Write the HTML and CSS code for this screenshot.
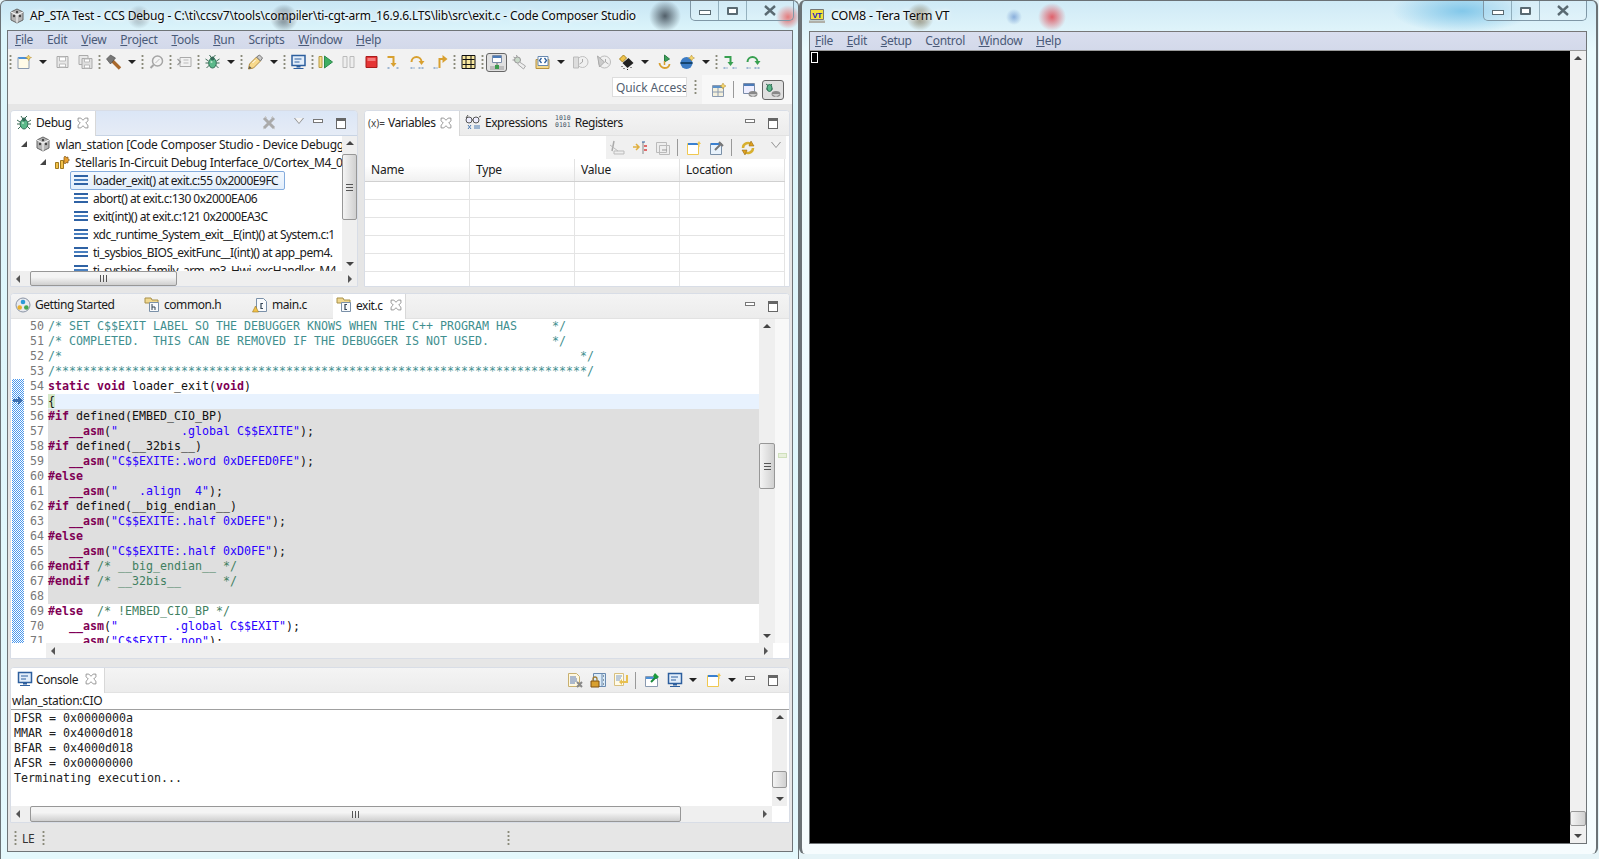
FILE: index.html
```html
<!DOCTYPE html>
<html lang="en">
<head>
  <meta charset="UTF-8">
  <title>AP_STA Test - CCS Debug</title>
  <link rel="stylesheet" href="styles.css">
</head>
<body>
  <svg class="defs" width="0" height="0">
    <symbol id="i-cube" viewBox="0 0 16 16"><path d="M8 1l6 3v8l-6 3-6-3V4z" fill="#b5b5b5" stroke="#666"/><path d="M2 4l6 3 6-3M8 7v8" fill="none" stroke="#fff"/><circle cx="5" cy="8" r="1.2" fill="#444"/><circle cx="11" cy="8" r="1.2" fill="#444"/><circle cx="8" cy="4" r="1.2" fill="#444"/></symbol>
    <symbol id="i-new" viewBox="0 0 16 16"><path d="M1.500 3.500h11v11h-11z" fill="#fffbe8" stroke="#8a9ab0"/><path d="M2 3h10v2H2z" fill="#4a90d8"/><path d="M12 1l1 2 2 .5-2 1-1 2-1-2-2-1 2-.5z" fill="#f6d66a" stroke="#b08a30" stroke-width=".5"/></symbol>
    <symbol id="i-save" viewBox="0 0 16 16"><path d="M2.500 2.500h11v11h-11z" fill="#e8e8e8" stroke="#aaa"/><path d="M5 3h6v4H5zM5 10h6v3H5z" fill="#fff" stroke="#bbb"/></symbol>
    <symbol id="i-saveall" viewBox="0 0 16 16"><path d="M1.500 1.500h9v9h-9z" fill="#e8e8e8" stroke="#aaa"/><path d="M4.500 4.500h10v10h-10z" fill="#e0e0e0" stroke="#aaa"/><path d="M7 5h5v3H7zM7 11h5v3H7z" fill="#fff" stroke="#bbb"/></symbol>
    <symbol id="i-hammer" viewBox="0 0 16 16"><path d="M6 6l8.500 8.500" stroke="#a8682c" stroke-width="3.400"/><path d="M1 5l4-4 5 3-5 6z" fill="#777" stroke="#444" stroke-width=".6"/></symbol>
    <symbol id="i-search" viewBox="0 0 16 16"><circle cx="9" cy="7" r="5" fill="#f4f4f4" stroke="#a5a5a5" stroke-width="1.500"/><path d="M5 11l-3 3" stroke="#a5a5a5" stroke-width="2"/><path d="M7 9l4-4" stroke="#bbb"/></symbol>
    <symbol id="i-ext" viewBox="0 0 16 16"><path d="M3.500 3.500h11v9h-11z" fill="#f2f2f2" stroke="#aaa"/><path d="M1 5l3 3-3 3" fill="none" stroke="#999" stroke-width="1.200"/><path d="M7 6h5M7 9h5" stroke="#bbb"/></symbol>
    <symbol id="i-bug" viewBox="0 0 16 16"><path d="M1 5l3 2M15 5l-3 2M1 9h3M15 9h-3M2 14l3-3M14 14l-3-3M5 1l2 3M11 1L9 3" stroke="#3b6b55" fill="none"/><ellipse cx="8" cy="9" rx="3.800" ry="5" fill="#5bb98a" stroke="#2f6e55"/><circle cx="8" cy="4.500" r="2" fill="#356b58"/><circle cx="7" cy="8" r="1" fill="#bfe8cf"/></symbol>
    <symbol id="i-pencil" viewBox="0 0 16 16"><path d="M1 15l1-5 7-7 4 4-7 7z" fill="#f8d98c" stroke="#b08a40"/><path d="M5 9l3-3" stroke="#fff"/><path d="M9 3l3-2 3 3-2 3z" fill="#c8c8c8" stroke="#777"/><path d="M1 15l1-3 2 2z" fill="#555"/></symbol>
    <symbol id="i-monitor" viewBox="0 0 16 16"><path d="M1.500 1.500h13v10h-13z" fill="#e3eefa" stroke="#2d5f9e" stroke-width="1.500"/><path d="M4 5h7M4 8h5" stroke="#2d5f9e"/><path d="M6 12h4v1.500H6zM3 14h10v1H3z" fill="#2d5f9e"/></symbol>
    <symbol id="i-resume" viewBox="0 0 16 16"><path d="M1.500 2.500h3v11h-3z" fill="#f5dd8c" stroke="#b89a40"/><path d="M7 2l8 6-8 6z" fill="#3fae62" stroke="#2c8a4c"/></symbol>
    <symbol id="i-suspend" viewBox="0 0 16 16"><path d="M2.500 2.500h4v11h-4zM9.500 2.500h4v11h-4z" fill="#eee" stroke="#bbb"/></symbol>
    <symbol id="i-stop" viewBox="0 0 16 16"><path d="M2.500 2.500h11v11h-11z" fill="#e53535" stroke="#a81c1c"/><path d="M4 4h8v3H4z" fill="#f47c7c"/></symbol>
    <symbol id="i-into" viewBox="0 0 16 16"><path d="M1 3h6v7" fill="none" stroke="#d8a030" stroke-width="2"/><path d="M4 9h6l-3 4z" fill="#d8a030"/><path d="M1 14h3M10 14h3" stroke="#4a7ab0" stroke-dasharray="2 1"/></symbol>
    <symbol id="i-over" viewBox="0 0 16 16"><path d="M2 8a5 5 0 0 1 10 0" fill="none" stroke="#d8a030" stroke-width="2"/><path d="M9 7h6l-3 4z" fill="#d8a030"/><path d="M1 14h4M9 14h5" stroke="#4a7ab0" stroke-dasharray="2 1"/></symbol>
    <symbol id="i-ret" viewBox="0 0 16 16"><path d="M7 14V5h4" fill="none" stroke="#d8a030" stroke-width="2"/><path d="M10 1l5 4-5 4z" fill="#d8a030"/><path d="M1 14h4" stroke="#4a7ab0" stroke-dasharray="2 1"/></symbol>
    <symbol id="i-grid" viewBox="0 0 16 16"><path d="M1.500 1.500h13v13h-13z" fill="#f8e8a0" stroke="#111"/><path d="M5.500 2v12M10.500 2v12M2 5.500h12M2 10.500h12" stroke="#111"/></symbol>
    <symbol id="i-mode" viewBox="0 0 16 16"><path d="M3.500 1.500h9v7h-9z" fill="#fff" stroke="#7a8ca8"/><path d="M4 2h8v2H4z" fill="#4a7ab8"/><path d="M8 9v3" stroke="#666"/><path d="M1 13h14M1 15h14" stroke="#999"/><path d="M6 11h4v4H6z" fill="#3a9a4c"/></symbol>
    <symbol id="i-tag" viewBox="0 0 16 16"><path d="M2 3l3 2M5 1l1 3M1 6h3" stroke="#999"/><ellipse cx="6" cy="6" rx="3" ry="3" fill="#c8d8c8" stroke="#999"/><path d="M8 8l6 4-2 3-6-5z" fill="#eee" stroke="#aaa"/></symbol>
    <symbol id="i-folder" viewBox="0 0 16 16"><path d="M1.500 14.500v-9h13v9z" fill="#f5d98e" stroke="#b8923e"/><path d="M3.500 2.500h10v9h-10z" fill="#fff" stroke="#6a8ab0"/><path d="M7 4l-2 2.500L7 9M10 4l2 2.500L10 9" fill="none" stroke="#2d5f9e" stroke-width="1.300"/></symbol>
    <symbol id="i-g1" viewBox="0 0 16 16"><circle cx="10" cy="8" r="5.500" fill="#f0f0f0" stroke="#c0c0c0"/><path d="M1 3h5v11H1z" fill="#ddd" stroke="#bbb"/><path d="M10 5v3l-3 2" stroke="#aaa" fill="none"/></symbol>
    <symbol id="i-g2" viewBox="0 0 16 16"><circle cx="9" cy="8" r="6" fill="#f0f0f0" stroke="#bbb"/><path d="M2 2l7 6-5 5z" fill="#ccc" stroke="#aaa"/><path d="M10 5v3l3 2" stroke="#aaa" fill="none"/></symbol>
    <symbol id="i-chip" viewBox="0 0 16 16"><path d="M4 9l6-5 5 5-6 5z" fill="#222"/><path d="M1 5l4-4 3 3-4 4z" fill="#f0c44c" stroke="#a88420"/><path d="M4 12l-1 1M6 14l-1 1M9 15v1M12 13l1 1" stroke="#222"/></symbol>
    <symbol id="i-reload" viewBox="0 0 16 16"><path d="M3 9c0 3 3 5 5 5s5-1 5-4" fill="none" stroke="#d8a030" stroke-width="1.800"/><path d="M8 1l5 4-5 3z" fill="#3aa05a" stroke="#2c7a44"/><path d="M8 7v4" stroke="#d8a030" stroke-width="1.500"/></symbol>
    <symbol id="i-ball" viewBox="0 0 16 16"><circle cx="7" cy="9" r="6" fill="#3d7cc4"/><path d="M1 9h12" stroke="#16456f" stroke-width="2"/><path d="M12 1l1 2 2 1-2 1-1 2-1-2-2-1 2-1z" fill="#f6d66a" stroke="#b08a30" stroke-width=".5"/></symbol>
    <symbol id="i-into2" viewBox="0 0 16 16"><path d="M2 3h6v6" fill="none" stroke="#38a050" stroke-width="2"/><path d="M5 8h6l-3 4z" fill="#38a050"/><path d="M1 14h4M10 14h4" stroke="#4a7ab0" stroke-dasharray="2 1"/></symbol>
    <symbol id="i-over2" viewBox="0 0 16 16"><path d="M2 8a5 5 0 0 1 10 0" fill="none" stroke="#38a050" stroke-width="2"/><path d="M9 7h6l-3 4z" fill="#38a050"/><path d="M1 14h4M9 14h5" stroke="#4a7ab0" stroke-dasharray="2 1"/></symbol>
    <symbol id="i-persp" viewBox="0 0 16 16"><path d="M1.500 3.500h11v11h-11z" fill="#f4f0dc" stroke="#8a9ab0"/><path d="M2 4h10v2H2z" fill="#5a90c8"/><path d="M7 6v8M2 10h10" stroke="#8a9ab0"/><path d="M12 1l1 2 2 1-2 1-1 2-1-2-2-1 2-1z" fill="#f6d66a" stroke="#b08a30" stroke-width=".5"/></symbol>
    <symbol id="i-edit-p" viewBox="0 0 16 16"><path d="M1.500 1.500h11v10h-11z" fill="#eef" stroke="#7a8ca8"/><path d="M2 2h10v2H2z" fill="#4a7ab8"/><ellipse cx="11" cy="12" rx="4.500" ry="3" fill="#888"/><path d="M7 12l4 3 4-3" fill="#ccc"/></symbol>
    <symbol id="i-debug-p" viewBox="0 0 16 16"><path d="M1 2l3 2M7 2L5 4M1 7h2M8 7H6" stroke="#2f6e55" fill="none"/><ellipse cx="4.500" cy="6" rx="2.500" ry="3.500" fill="#5bb98a" stroke="#2f6e55"/><ellipse cx="11" cy="12" rx="4.500" ry="3" fill="#888"/><path d="M7 12l4 3 4-3" fill="#ccc"/></symbol>
    <symbol id="i-rm" viewBox="0 0 16 16"><path d="M4 1l2 2M12 1l-2 2M2 14l3-2M14 14l-3-2" stroke="#ccc"/><path d="M3 3l10 10M13 3L3 13" stroke="#aaa" stroke-width="3"/></symbol>
    <symbol id="i-start" viewBox="0 0 16 16"><circle cx="8" cy="8" r="7" fill="#e8eaef" stroke="#8a94a4"/><circle cx="8" cy="5" r="2.300" fill="#2a9ad8"/><circle cx="4.700" cy="10.500" r="2.300" fill="#e8b030"/><circle cx="11.300" cy="10.500" r="2.300" fill="#46a850"/></symbol>
    <symbol id="i-h" viewBox="0 0 16 16"><path d="M1 1h6l1 2h6v3H1z" fill="#f0d890" stroke="#a89048"/><path d="M5.500 5.500h9v9h-9z" fill="#f8fafc" stroke="#7a90a8"/><path d="M8 7v6M8 10h3v3" fill="none" stroke="#345"/></symbol>
    <symbol id="i-c" viewBox="0 0 16 16"><path d="M4.500 1.500h7l3 3v10h-10z" fill="#f8fafc" stroke="#7a90a8"/><path d="M11 6.500H9v5h2" fill="none" stroke="#345" stroke-width="1.200"/><path d="M3.500 9l3 6h-6z" fill="#f2c24a" stroke="#a07a20" stroke-width=".6"/></symbol>
    <symbol id="i-c2" viewBox="0 0 16 16"><path d="M1 1h6l1 2h6v3H1z" fill="#f0d890" stroke="#a89048"/><path d="M5.500 5.500h9v9h-9z" fill="#f8fafc" stroke="#7a90a8"/><path d="M11 7.500H9v5h2" fill="none" stroke="#345" stroke-width="1.200"/></symbol>
    <symbol id="i-expr" viewBox="0 0 16 16"><circle cx="4" cy="6" r="3" fill="#eef" stroke="#555"/><circle cx="11" cy="6" r="3" fill="#eef" stroke="#555"/><path d="M7 6h1M1 4l2-3M14 3l2-1" stroke="#555" fill="none"/><path d="M9 12h6M9 14h6M3 11l3 4M6 11l-3 4" stroke="#4a7ab0"/></symbol>
    <symbol id="i-stack" viewBox="0 0 16 16"><path d="M1 3h14v2H1z" fill="#2f62a4"/><path d="M1 7h14v2H1z" fill="#4a80c0"/><path d="M1 11h14v2H1z" fill="#2f62a4"/></symbol>
    <symbol id="i-conn" viewBox="0 0 16 16"><path d="M1.500 8.500h3v6h-3zM6.500 6.500h3v8h-3z" fill="#f2c24a" stroke="#a07a20"/><path d="M11 2l1 1.500 2-.5v2l1.500 1-1.500 1v2l-2-.5L11 10l-1-1.500V3.500z" fill="#e8a030" stroke="#805010" stroke-width=".7"/></symbol>
    <symbol id="i-v1" viewBox="0 0 16 16"><path d="M5 1l-2 10" stroke="#aaa" stroke-width="1.500"/><path d="M1 5l8 6M5 11h10v3H5z" fill="#eee" stroke="#bbb"/></symbol>
    <symbol id="i-v2" viewBox="0 0 16 16"><path d="M1 7h5M4 4l3 3-3 3" stroke="#e0b040" fill="none" stroke-width="1.500"/><path d="M11 2v12" stroke="#888"/><path d="M12 5h3v2h-3zM12 9h3v2h-3z" fill="#e06a6a"/><path d="M10 2h3" stroke="#2d5f9e"/></symbol>
    <symbol id="i-v3" viewBox="0 0 16 16"><path d="M1.500 2.500h10v10h-10zM4.500 5.500h10v9h-10z" fill="#eee" stroke="#bbb"/><path d="M7 10h5" stroke="#999"/></symbol>
    <symbol id="i-v4" viewBox="0 0 16 16"><path d="M1.500 3.500h11v11h-11z" fill="#fff" stroke="#f0c850"/><path d="M2 3h10v2H2z" fill="#3a80d0"/><path d="M13 1l-2 3h4z" fill="#f0c850"/><path d="M12.500 4h1v3h-1z" fill="#f0c850"/></symbol>
    <symbol id="i-v5" viewBox="0 0 16 16"><path d="M1.500 3.500h11v11h-11z" fill="#e8f2fc" stroke="#7a90a8"/><path d="M2 3h10v2H2z" fill="#3a80d0"/><path d="M6 10l6-6M10 2l4 4" stroke="#777" stroke-width="2"/></symbol>
    <symbol id="i-sync" viewBox="0 0 16 16"><path d="M3 8a5 5 0 0 1 9-3M13 8a5 5 0 0 1-9 3" fill="none" stroke="#d8b030" stroke-width="2.500"/><path d="M11 1l3 5-5 0zM5 15L2 10h5z" fill="#e0a020" stroke="#886010" stroke-width=".5"/></symbol>
    <symbol id="i-cl1" viewBox="0 0 16 16"><path d="M1.500 1.500h8l3 3v10h-11z" fill="#fff8e0" stroke="#c8b070"/><path d="M3 5h6M3 7h7M3 9h7M3 11h5" stroke="#5a7ab8"/><path d="M10 10l5 5M15 10l-5 5" stroke="#888" stroke-width="2"/></symbol>
    <symbol id="i-cl2" viewBox="0 0 16 16"><path d="M3.500 1.500h12v13h-12z" fill="#dcecf8" stroke="#6a8ab0"/><path d="M12 2v12" stroke="#6a8ab0"/><path d="M13 4h1M13 8h1M13 12h1" stroke="#345"/><path d="M1 9h8v6H1z" fill="#d8a030" stroke="#805010"/><path d="M3 9V7a2 2 0 0 1 4 0v2" fill="none" stroke="#a07a30" stroke-width="1.300"/></symbol>
    <symbol id="i-cl3" viewBox="0 0 16 16"><path d="M1.500 1.500h9v12h-9z" fill="#fffbe8" stroke="#d8c080"/><path d="M3 4h6M3 6h5M3 8h4" stroke="#7a9ac8"/><path d="M14 3v7H8" fill="none" stroke="#e8c050" stroke-width="2"/><path d="M9 7l-3 3 3 3z" fill="#e8c050"/></symbol>
    <symbol id="i-pin" viewBox="0 0 16 16"><path d="M1.500 4.500h12v10h-12z" fill="#fff" stroke="#8a9ab0"/><path d="M2 5h11v2H2z" fill="#4a90d8"/><path d="M7 10l6-6" stroke="#1a8a3a" stroke-width="2"/><path d="M11 1l4 4-3 2-3-3z" fill="#1a9a3a"/></symbol>
    <symbol id="i-vt" viewBox="0 0 16 16"><path d="M1.500 1.500h13v10h-13z" fill="#f4e23c" stroke="#777"/><text x="8" y="9.500" text-anchor="middle" font-family="Liberation Sans, sans-serif" font-size="8" font-weight="bold" fill="#1818c0">VT</text><path d="M0 12.500h16v2.500H0z" fill="#b0b0a8"/></symbol>
    <symbol id="x-close" viewBox="0 0 11 11"><path d="M1 1h2.500l2 2 2-2H10v2.500l-2 2 2 2V10H7.500l-2-2-2 2H1V7.500l2-2-2-2z" fill="#fff" stroke="#8a8a8a" stroke-width=".8"/></symbol>
  </svg>

  <div class="window window-left">
    <div class="titlebar">
      <svg class="ic app-ic"><use href="#i-cube"/></svg>
      <span class="title-text">AP_STA Test - CCS Debug - C:\ti\ccsv7\tools\compiler\ti-cgt-arm_16.9.6.LTS\lib\src\exit.c - Code Composer Studio</span>
      <div class="caption">
        <span class="cap-btn cap-min"><i></i></span>
        <span class="cap-btn cap-max"><i></i></span>
        <span class="cap-btn cap-close"><svg width="12" height="11"><path d="M1 1l10 9M11 1L1 10" stroke="#5a6a72" stroke-width="2.400"/></svg></span>
      </div>
    </div>

    <div class="client">
      <div class="menubar">
        <span><u>F</u>ile</span><span>Edit</span><span><u>V</u>iew</span><span><u>P</u>roject</span><span><u>T</u>ools</span><span><u>R</u>un</span><span>Scripts</span><span><u>W</u>indow</span><span><u>H</u>elp</span>
      </div>

      <div class="toolarea">
        <div class="toolbar">
          <i class="grip"></i><svg class="tb"><use href="#i-new"/></svg><i class="drop"></i><svg class="tb"><use href="#i-save"/></svg><svg class="tb"><use href="#i-saveall"/></svg>
          <i class="grip"></i><svg class="tb"><use href="#i-hammer"/></svg><i class="drop"></i>
          <i class="grip"></i><svg class="tb"><use href="#i-search"/></svg>
          <i class="grip"></i><svg class="tb"><use href="#i-ext"/></svg>
          <i class="grip"></i><svg class="tb"><use href="#i-bug"/></svg><i class="drop"></i>
          <i class="grip"></i><svg class="tb"><use href="#i-pencil"/></svg><i class="drop"></i>
          <i class="grip"></i><svg class="tb"><use href="#i-monitor"/></svg>
          <i class="grip tight"></i><svg class="tb"><use href="#i-resume"/></svg><svg class="tb"><use href="#i-suspend"/></svg><svg class="tb"><use href="#i-stop"/></svg><svg class="tb"><use href="#i-into"/></svg><svg class="tb"><use href="#i-over"/></svg><svg class="tb"><use href="#i-ret"/></svg>
          <i class="grip"></i><svg class="tb"><use href="#i-grid"/></svg>
          <i class="grip"></i><span class="tb-on"><svg class="ic"><use href="#i-mode"/></svg></span><svg class="tb"><use href="#i-tag"/></svg><svg class="tb"><use href="#i-folder"/></svg><i class="drop"></i><svg class="tb"><use href="#i-g1"/></svg><svg class="tb"><use href="#i-g2"/></svg><svg class="tb"><use href="#i-chip"/></svg><i class="drop"></i><svg class="tb"><use href="#i-reload"/></svg><svg class="tb"><use href="#i-ball"/></svg><i class="drop"></i>
          <i class="grip"></i><svg class="tb"><use href="#i-into2"/></svg><svg class="tb"><use href="#i-over2"/></svg>
        </div>
        <div class="toolbar2">
          <span class="quick">Quick Access</span>
          <i class="grip"></i>
          <div class="persp">
            <svg class="ic"><use href="#i-persp"/></svg>
            <i class="vsep"></i>
            <svg class="ic"><use href="#i-edit-p"/></svg>
            <span class="tb-on small"><svg class="ic"><use href="#i-debug-p"/></svg></span>
          </div>
        </div>
      </div>

      <div class="workbench">
        <div class="top-row">
          <section class="pane debug-pane">
            <div class="tabbar tabbar-blue">
              <div class="tab tab-on tab-debug"><svg class="ic"><use href="#i-bug"/></svg><span>Debug</span><svg class="close"><use href="#x-close"/></svg></div>
              <div class="tab-tools">
                <svg class="ic"><use href="#i-rm"/></svg>
                <i class="view-menu"></i><i class="pane-min"></i><i class="pane-max"></i>
              </div>
            </div>
            <div class="debug-body">
              <div class="tree">
                <div class="node lv0"><i class="twist"></i><svg class="ic"><use href="#i-cube"/></svg><span>wlan_station [Code Composer Studio - Device Debugg</span></div>
                <div class="node lv1"><i class="twist"></i><svg class="ic"><use href="#i-conn"/></svg><span>Stellaris In-Circuit Debug Interface_0/Cortex_M4_0</span></div>
                <div class="node lv2"><div class="frame-sel"><svg class="ic"><use href="#i-stack"/></svg><span>loader_exit() at exit.c:55 0x2000E9FC</span></div></div>
                <div class="node lv2"><svg class="ic"><use href="#i-stack"/></svg><span>abort() at exit.c:130 0x2000EA06</span></div>
                <div class="node lv2"><svg class="ic"><use href="#i-stack"/></svg><span>exit(int)() at exit.c:121 0x2000EA3C</span></div>
                <div class="node lv2"><svg class="ic"><use href="#i-stack"/></svg><span>xdc_runtime_System_exit__E(int)() at System.c:1</span></div>
                <div class="node lv2"><svg class="ic"><use href="#i-stack"/></svg><span>ti_sysbios_BIOS_exitFunc__I(int)() at app_pem4.</span></div>
                <div class="node lv2"><svg class="ic"><use href="#i-stack"/></svg><span>ti_sysbios_family_arm_m3_Hwi_excHandler_M4</span></div>
              </div>
              <div class="vbar vbar-debug"><i class="up"></i><div class="track"><div class="thumb thumb-debug"><b></b></div></div><i class="down"></i></div>
            </div>
            <div class="hbar hbar-debug"><i class="left"></i><div class="track"><div class="thumb thumb-dbg-h"><b></b></div></div><i class="right"></i></div>
          </section>

          <section class="pane var-pane">
            <div class="tabbar">
              <div class="tab tab-on tab-var"><span class="x-eq">(x)=</span><span>Variables</span><svg class="close"><use href="#x-close"/></svg></div>
              <div class="tab tab-expr"><svg class="ic"><use href="#i-expr"/></svg><span>Expressions</span></div>
              <div class="tab tab-reg"><span class="bin">1010<br>0101</span><span>Registers</span></div>
              <div class="tab-tools"><i class="pane-min"></i><i class="pane-max"></i></div>
            </div>
            <div class="var-tools">
              <svg class="ic"><use href="#i-v1"/></svg><svg class="ic"><use href="#i-v2"/></svg><svg class="ic"><use href="#i-v3"/></svg><i class="vsep"></i><svg class="ic"><use href="#i-v4"/></svg><svg class="ic"><use href="#i-v5"/></svg><i class="vsep"></i><svg class="ic"><use href="#i-sync"/></svg><i class="view-menu"></i>
            </div>
            <div class="var-table">
              <div class="var-head"><span>Name</span><span>Type</span><span>Value</span><span>Location</span></div>
              <div class="var-row"><i></i><i></i><i></i><i></i></div>
              <div class="var-row"><i></i><i></i><i></i><i></i></div>
              <div class="var-row"><i></i><i></i><i></i><i></i></div>
              <div class="var-row"><i></i><i></i><i></i><i></i></div>
              <div class="var-row"><i></i><i></i><i></i><i></i></div>
              <div class="var-row"><i></i><i></i><i></i><i></i></div>
            </div>
          </section>
        </div>

        <section class="pane editor-pane">
          <div class="tabbar">
            <div class="tab tab-gs"><svg class="ic"><use href="#i-start"/></svg><span>Getting Started</span></div>
            <div class="tab tab-common"><svg class="ic"><use href="#i-h"/></svg><span>common.h</span></div>
            <div class="tab tab-main"><svg class="ic"><use href="#i-c"/></svg><span>main.c</span></div>
            <div class="tab tab-on tab-exit"><svg class="ic"><use href="#i-c2"/></svg><span>exit.c</span><svg class="close"><use href="#x-close"/></svg></div>
            <div class="tab-tools"><i class="pane-min"></i><i class="pane-max"></i></div>
          </div>
          <div class="editor-body">
            <div class="ruler">
              <div class="ruler-blank"></div>
              <div class="ruler-mark"><svg class="pc-arrow" width="10" height="9"><path d="M0 3h5V0l5 4.500L5 9V6H0z" fill="#3d6fb0"/></svg></div>
            </div>
            <div class="code">
<div class="ln"><b>50</b><code class="cm">/* SET C$$EXIT LABEL SO THE DEBUGGER KNOWS WHEN THE C++ PROGRAM HAS     */</code></div>
<div class="ln"><b>51</b><code class="cm">/* COMPLETED.  THIS CAN BE REMOVED IF THE DEBUGGER IS NOT USED.         */</code></div>
<div class="ln"><b>52</b><code class="cm">/*                                                                          */</code></div>
<div class="ln"><b>53</b><code class="cm">/****************************************************************************/</code></div>
<div class="ln"><b>54</b><code><em>static</em> <em>void</em> loader_exit(<em>void</em>)</code></div>
<div class="ln ln-cur"><b>55</b><code><mark>{</mark></code></div>
<div class="ln ln-grey"><b>56</b><code><em>#if</em> defined(EMBED_CIO_BP)</code></div>
<div class="ln ln-grey"><b>57</b><code>   <em>__asm</em>(<s>"         .global C$$EXITE"</s>);</code></div>
<div class="ln ln-grey"><b>58</b><code><em>#if</em> defined(__32bis__)</code></div>
<div class="ln ln-grey"><b>59</b><code>   <em>__asm</em>(<s>"C$$EXITE:.word 0xDEFED0FE"</s>);</code></div>
<div class="ln ln-grey"><b>60</b><code><em>#else</em></code></div>
<div class="ln ln-grey"><b>61</b><code>   <em>__asm</em>(<s>"   .align  4"</s>);</code></div>
<div class="ln ln-grey"><b>62</b><code><em>#if</em> defined(__big_endian__)</code></div>
<div class="ln ln-grey"><b>63</b><code>   <em>__asm</em>(<s>"C$$EXITE:.half 0xDEFE"</s>);</code></div>
<div class="ln ln-grey"><b>64</b><code><em>#else</em></code></div>
<div class="ln ln-grey"><b>65</b><code>   <em>__asm</em>(<s>"C$$EXITE:.half 0xD0FE"</s>);</code></div>
<div class="ln ln-grey"><b>66</b><code><em>#endif</em> <span class="cm2">/* __big_endian__ */</span></code></div>
<div class="ln ln-grey"><b>67</b><code><em>#endif</em> <span class="cm2">/* __32bis__      */</span></code></div>
<div class="ln ln-grey"><b>68</b><code></code></div>
<div class="ln"><b>69</b><code><em>#else</em>  <span class="cm2">/* !EMBED_CIO_BP */</span></code></div>
<div class="ln"><b>70</b><code>   <em>__asm</em>(<s>"        .global C$$EXIT"</s>);</code></div>
<div class="ln"><b>71</b><code>   <em>__asm</em>(<s>"C$$EXIT: nop"</s>);</code></div>
            </div>
            <div class="vbar vbar-editor"><i class="up"></i><div class="track"><div class="thumb thumb-editor"><b></b></div></div><i class="down"></i></div>
            <div class="overview"><i></i></div>
          </div>
          <div class="editor-hbar"><i class="left"></i><i class="right"></i></div>
        </section>

        <section class="pane console-pane">
          <div class="tabbar">
            <div class="tab tab-on tab-console"><svg class="ic"><use href="#i-monitor"/></svg><span>Console</span><svg class="close"><use href="#x-close"/></svg></div>
            <div class="tab-tools console-tools">
              <svg class="ic"><use href="#i-cl1"/></svg><svg class="ic"><use href="#i-cl2"/></svg><svg class="ic"><use href="#i-cl3"/></svg><i class="vsep"></i><svg class="ic"><use href="#i-pin"/></svg><svg class="ic"><use href="#i-monitor"/></svg><i class="drop"></i><svg class="ic"><use href="#i-v4"/></svg><i class="drop"></i><i class="pane-min"></i><i class="pane-max"></i>
            </div>
          </div>
          <div class="console-label">wlan_station:CIO</div>
          <div class="console-body">
            <pre class="console-out">DFSR = 0x0000000a
MMAR = 0x4000d018
BFAR = 0x4000d018
AFSR = 0x00000000
Terminating execution...</pre>
            <div class="vbar vbar-console"><i class="up"></i><div class="track"><div class="thumb thumb-console"></div></div><i class="down"></i></div>
          </div>
          <div class="hbar hbar-console"><i class="left"></i><div class="track"><div class="thumb thumb-con-h"><b></b></div></div><i class="right"></i></div>
        </section>
      </div>

      <div class="statusbar">
        <i class="grip"></i><span class="status-le">LE</span><i class="grip"></i><i class="grip status-end"></i>
      </div>
    </div>
  </div>

  <div class="window window-right">
    <div class="titlebar">
      <svg class="ic app-ic vt-ic"><use href="#i-vt"/></svg>
      <span class="title-text">COM8 - Tera Term VT</span>
      <div class="caption">
        <span class="cap-btn cap-min"><i></i></span>
        <span class="cap-btn cap-max"><i></i></span>
        <span class="cap-btn cap-close"><svg width="12" height="11"><path d="M1 1l10 9M11 1L1 10" stroke="#5a6a72" stroke-width="2.400"/></svg></span>
      </div>
    </div>
    <div class="client term-client">
      <div class="menubar term-menu">
        <span><u>F</u>ile</span><span><u>E</u>dit</span><span><u>S</u>etup</span><span>C<u>o</u>ntrol</span><span><u>W</u>indow</span><span><u>H</u>elp</span>
      </div>
      <div class="term-body">
        <div class="term-screen"><div class="cursor"></div></div>
        <div class="vbar vbar-term"><i class="up"></i><div class="track"><div class="thumb thumb-term"></div></div><i class="down"></i></div>
      </div>
    </div>
  </div>
</body>
</html>
```

FILE: styles.css
```css
/* page + glass frame */
html, body {
  margin: 0;
  padding: 0;
  height: 859px;
  overflow: hidden;
}

body {
  display: flex;
  font-family: "Noto Sans", sans-serif;
  font-size: 12px;
  letter-spacing: -0.3px;
  color: #1a1a1a;
  background: #e6f4f8;
}

.defs {
  position: absolute;
}

.ic {
  width: 16px;
  height: 16px;
  flex: none;
}

.window {
  display: flex;
  flex-direction: column;
  height: 859px;
  flex: none;
  box-sizing: border-box;
  border: 1px solid #6b7276;
  border-bottom: 0;
  border-radius: 6px 6px 0 0;
}

.window-left {
  width: 799px;
  padding: 0 5px 7px 6px;
  background:
    radial-gradient(circle 14px at 283px 17px, rgba(60, 70, 80, .75), transparent),
    radial-gradient(circle 12px at 138px 16px, rgba(60, 70, 80, .45), transparent),
    radial-gradient(circle 16px at 664px 15px, rgba(50, 60, 70, .8), transparent),
    radial-gradient(circle 12px at 787px 16px, rgba(225, 70, 70, .85), transparent),
    linear-gradient(#c8e6f4, #dcf5fb 30px, #e4f8fc);
}

.window-right {
  width: 799px;
  height: 854px;
  padding: 0 9px 10px 7px;
  border-width: 1px 2px 1px 3px;
  border-radius: 6px;
  background:
    radial-gradient(circle 14px at 118px 16px, rgba(110, 95, 60, .8), transparent),
    radial-gradient(circle 14px at 250px 16px, rgba(225, 60, 70, .8), transparent),
    radial-gradient(circle 8px at 212px 16px, rgba(60, 110, 190, .5), transparent),
    radial-gradient(ellipse 70px 22px at 660px 10px, rgba(110, 190, 230, .8), transparent),
    linear-gradient(#cfeaf6, #eafafd 50px, #f6fcfe);
}

/* title bar */
.titlebar {
  display: flex;
  align-items: flex-start;
  height: 29px;
  flex: none;
}

.window-right .titlebar {
  height: 30px;
}

.app-ic {
  margin: 7px 5px 0 2px;
}

.vt-ic {
  margin: 7px 6px 0 0;
}

.title-text {
  margin-top: 6px;
  font-size: 12px;
  letter-spacing: -0.18px;
  color: #0a0a0a;
  text-shadow: 0 0 6px #fff, 0 0 3px #fff;
}

.window-right .title-text {
  font-size: 12.500px;
  letter-spacing: -0.22px;
}

.caption {
  display: flex;
  margin-left: auto;
  height: 19px;
  border: 1px solid #7f97a6;
  border-top: 0;
  border-radius: 0 0 5px 5px;
  background: rgba(255, 255, 255, .18);
}

.window-left .caption {
  margin-right: -1px;
}

.cap-btn {
  display: flex;
  align-items: center;
  justify-content: center;
  width: 27px;
  border-left: 1px solid rgba(120, 150, 165, .7);
}

.cap-min {
  border-left: 0;
}

.cap-close {
  width: 46px;
}

.cap-min i {
  width: 10px;
  height: 3px;
  margin-top: 4px;
  background: #fff;
  border: 1px solid #5a6a72;
}

.cap-max i {
  width: 7px;
  height: 4px;
  background: #fff;
  border: 2px solid #5a6a72;
  border-radius: 1px;
}

/* client */
.client {
  display: flex;
  flex-direction: column;
  flex: 1;
  min-height: 0;
  border: 1px solid #6f7477;
  background: #e6e6e6;
}

.menubar {
  display: flex;
  align-items: center;
  height: 18px;
  flex: none;
  padding: 0 0 2px 7px;
  box-sizing: border-box;
  gap: 14px;
  background: linear-gradient(#d9deee, #d3d9ea);
  color: #4a5a78;
}

.toolarea {
  height: 55px;
  flex: none;
  box-sizing: border-box;
  padding-bottom: 5px;
  background: #f2f2f2;
  display: flex;
  flex-direction: column;
}

.toolbar {
  display: flex;
  align-items: center;
  height: 26px;
}

.tb {
  width: 23px;
  height: 16px;
  flex: none;
}

.tb-on {
  display: flex;
  align-items: center;
  justify-content: center;
  width: 21px;
  height: 19px;
  margin: 0 1px;
  flex: none;
  border: 1px solid #666;
  border-radius: 3px;
  background: #e0e0e0;
  box-sizing: border-box;
}

.drop {
  width: 0;
  height: 0;
  flex: none;
  margin: 0 4px 0 3px;
  border: 4px solid transparent;
  border-top: 4px solid #222;
  border-bottom: 0;
}

.grip {
  width: 5px;
  height: 17px;
  flex: none;
  background: radial-gradient(circle, #8a8a7a 1px, transparent 1.200px) center top / 5px 4px repeat-y;
}

.grip.tight {
  margin-right: -1px;
}

.toolbar2 {
  display: flex;
  align-items: center;
  justify-content: flex-end;
  flex: 1;
}

.quick {
  width: 75px;
  height: 20px;
  line-height: 19px;
  box-sizing: border-box;
  margin-right: 6px;
  padding-left: 3px;
  background: #fff;
  border: 1px solid #ddd;
  color: #555f70;
  letter-spacing: -0.1px;
  white-space: nowrap;
  overflow: hidden;
}

.persp {
  display: flex;
  align-items: center;
  align-self: stretch;
  margin-left: 4px;
  padding: 0 8px 0 9px;
  margin-bottom: -5px;
  background: #f8f8f8;
}

.vsep {
  width: 1px;
  height: 17px;
  flex: none;
  margin: 0 8px 0 6px;
  background: #999;
}

.tb-on.small {
  width: 22px;
  height: 20px;
  margin-left: 4px;
  margin-right: 0;
}

/* panes */
.workbench {
  flex: 1;
  min-height: 0;
  display: flex;
  flex-direction: column;
  gap: 6px;
  padding: 6px 2px 0;
}

.top-row {
  display: flex;
  gap: 6px;
  height: 177px;
  flex: none;
}

.pane {
  display: flex;
  flex-direction: column;
  min-width: 0;
  background: #fff;
  border: 1px solid #d8dde6;
  border-radius: 4px 4px 0 0;
  box-sizing: border-box;
  overflow: hidden;
}

.debug-pane {
  width: 348px;
  background: #f0f0f0;
}

.var-pane {
  width: 426px;
}

.editor-pane {
  height: 366px;
  flex: none;
}

.console-pane {
  flex: 1;
  min-height: 0;
  margin-top: 2px;
  height: 157px;
}

.tabbar {
  display: flex;
  align-items: stretch;
  height: 25px;
  flex: none;
  background: linear-gradient(#f4f4f4, #ececec);
  border-bottom: 1px solid #e2e2e2;
  box-sizing: border-box;
}

.tabbar-blue {
  background: linear-gradient(#dbe6f6, #e6ecf6);
  border-bottom-color: #c8d4e4;
}

.tab {
  display: flex;
  align-items: center;
  gap: 4px;
  padding-left: 3px;
  padding-bottom: 2px;
  flex: none;
  box-sizing: border-box;
  letter-spacing: -0.45px;
}

.editor-pane .tab,
.console-pane .tab {
  padding-bottom: 3px;
}

.tab-on {
  background: #fff;
  border-right: 1px solid #d8d8d8;
  margin-bottom: -1px;
}

.tab .close {
  width: 12px;
  height: 12px;
  flex: none;
}

.tab-debug { width: 85px; padding-left: 5px; }
.tab-debug .close { margin-left: 2px; }

.tab-var { width: 95px; background: #fff; padding-left: 3px; gap: 3px; }
.tab-var .close { margin-left: 2px; }
.x-eq { font-size: 10px; color: #444; letter-spacing: 0; }
.tab-expr { width: 92px; padding-left: 5px; gap: 4px; }
.tab-reg { width: 90px; gap: 4px; padding-left: 3px; }

.bin {
  font-family: "DejaVu Sans Mono", monospace;
  font-size: 6.500px;
  line-height: 7px;
  letter-spacing: 0;
  color: #445566;
}

.tab-gs { width: 128px; padding-left: 4px; }
.tab-common { width: 109px; padding-left: 5px; }
.tab-main { width: 85px; padding-left: 4px; }
.tab-exit { width: 73px; }
.tab-exit .close { margin-left: 3px; }
.tab-console { width: 94px; padding-left: 6px; gap: 3px; }
.tab-console .close { margin-left: 4px; }

.tab-tools {
  display: flex;
  align-items: center;
  margin-left: auto;
  padding-right: 11px;
  flex: none;
}

.debug-pane .tab-tools .ic {
  margin-right: 17px;
}

.console-tools .ic {
  margin-right: 7px;
}

.console-tools .vsep {
  margin: 0 8px 0 -1px;
}

.console-tools .drop {
  margin-left: -1px;
  margin-right: 9px;
}

.view-menu {
  width: 0;
  height: 0;
  margin-right: 9px;
  margin-top: -5px;
  border: 5px solid transparent;
  border-top: 6px solid #888;
  border-bottom: 0;
  flex: none;
  position: relative;
}

.view-menu::after {
  content: "";
  position: absolute;
  left: -4px;
  top: -6px;
  border: 4px solid transparent;
  border-top: 5px solid #f4f4f4;
  border-bottom: 0;
}

.pane-min {
  width: 8px;
  height: 2px;
  margin-right: 11px;
  margin-top: -5px;
  flex: none;
  border: 1px solid #777;
  background: #fff;
}

.pane-max {
  width: 8px;
  height: 7px;
  margin-left: 2px;
  flex: none;
  border: 1px solid #666;
  border-top-width: 3px;
  background: #fff;
}

/* debug tree */
.debug-body {
  display: flex;
  flex: 1;
  min-height: 0;
  background: #fff;
}

.tree {
  flex: 1;
  min-width: 0;
  overflow: hidden;
  margin-top: -1px;
}

.node {
  display: flex;
  align-items: center;
  gap: 5px;
  height: 18px;
  white-space: nowrap;
  flex: none;
}

.lv0 { padding-left: 10px; }
.lv1 { padding-left: 29px; }
.lv2 { padding-left: 62px; gap: 4px; letter-spacing: -0.5px; }

.twist {
  width: 0;
  height: 0;
  margin-right: 3px;
  flex: none;
  border-left: 6px solid transparent;
  border-bottom: 6px solid #444;
}

.frame-sel {
  display: flex;
  align-items: center;
  gap: 4px;
  height: 17px;
  margin-left: -3px;
  padding: 0 6px 0 2px;
  background: linear-gradient(#f3f8fe, #e2eefb);
  border: 1px solid #84acdd;
  border-radius: 2px;
}

/* scrollbars */
.vbar {
  display: flex;
  flex-direction: column;
  width: 15px;
  flex: none;
  background: #efefef;
}

.hbar {
  display: flex;
  height: 15px;
  flex: none;
  background: #efefef;
}

.track {
  flex: 1;
  min-width: 0;
  min-height: 0;
}

.vbar .up,
.vbar .down {
  height: 15px;
  flex: none;
}

.vbar .up::before,
.vbar .down::before,
.hbar .left::before,
.hbar .right::before,
.editor-hbar .left::before,
.editor-hbar .right::before {
  content: "";
  display: block;
  width: 0;
  height: 0;
}

.vbar .up::before {
  margin: 5px auto 0;
  border: 4px solid transparent;
  border-bottom: 4px solid #444;
  border-top: 0;
}

.vbar .down::before {
  margin: 6px auto 0;
  border: 4px solid transparent;
  border-top: 4px solid #444;
  border-bottom: 0;
}

.hbar .left,
.hbar .right,
.editor-hbar .left,
.editor-hbar .right {
  width: 15px;
  flex: none;
}

.hbar .left {
  width: 19px;
}

.hbar .left::before,
.editor-hbar .left::before {
  margin: 4px 0 0 5px;
  border: 4px solid transparent;
  border-right: 4px solid #555;
  border-left: 0;
}

.hbar .right::before,
.editor-hbar .right::before {
  margin: 4px 0 0 6px;
  border: 4px solid transparent;
  border-left: 4px solid #555;
  border-right: 0;
}

.thumb {
  display: flex;
  align-items: center;
  justify-content: center;
  box-sizing: border-box;
  border: 1px solid #979797;
  border-radius: 2px;
}

.vbar .thumb {
  background: linear-gradient(90deg, #f4f4f4, #d0d0d0);
}

.hbar .thumb {
  height: 100%;
  background: linear-gradient(#f4f4f4 40%, #cfcfcf);
}

.thumb b {
  display: block;
}

.vbar .thumb b {
  width: 7px;
  height: 5px;
  border-top: 1px solid #555;
  border-bottom: 1px solid #555;
  background: linear-gradient(#555, #555) center / 100% 1px no-repeat;
}

.hbar .thumb b {
  width: 5px;
  height: 7px;
  border-left: 1px solid #555;
  border-right: 1px solid #555;
  background: linear-gradient(#555, #555) center / 1px 100% no-repeat;
}

.thumb-debug { height: 66px; margin-top: 3px; }
.thumb-dbg-h { width: 147px; }
.thumb-editor { height: 46px; margin-top: 109px; }
.thumb-con-h { width: 651px; }
.thumb-console { height: 17px; margin-top: 46px; }
.thumb-term { height: 15px; margin-top: 745px; }

/* variables */
.var-tools {
  display: flex;
  align-items: center;
  height: 23px;
  flex: none;
  margin-left: 241px;
  margin-right: 3px;
  padding-left: 3px;
  background: #f0f0f0;
}

.var-tools .ic {
  margin-right: 7px;
}

.var-tools .vsep {
  margin: 0 8px 0 -1px;
}

.var-tools .view-menu {
  margin-left: 8px;
  margin-right: 0;
}

.var-table {
  flex: 1;
  min-height: 0;
  margin-right: 4px;
}

.var-head,
.var-row {
  display: grid;
  grid-template-columns: 105px 105px 105px 1fr;
}

.var-head {
  height: 23px;
  box-sizing: border-box;
  background: linear-gradient(#fff 30%, #f1f1f1);
  border-bottom: 1px solid #d0d0d0;
}

.var-head span {
  padding: 2px 0 0 6px;
  line-height: 17px;
  border-right: 1px solid #e2e2e2;
  letter-spacing: -0.2px;
}

.var-row {
  height: 18px;
  box-sizing: border-box;
  border-bottom: 1px solid #e4e4e4;
}

.var-row i {
  border-right: 1px solid #e4e4e4;
}

/* editor */
.editor-body {
  display: flex;
  flex: 1;
  min-height: 0;
  background: #fff;
}

.ruler {
  display: flex;
  flex-direction: column;
  width: 12px;
  flex: none;
  margin-left: 1px;
}

.ruler-blank {
  height: 60px;
  flex: none;
}

.ruler-mark {
  flex: 1;
  background: repeating-conic-gradient(#4a98ee 0 25%, #fff 0 50%) 0 0 / 2px 2px;
}

.pc-arrow {
  display: block;
  margin: 17px 0 0 1px;
}

.code {
  flex: 1;
  min-width: 0;
  overflow: hidden;
  font-family: "DejaVu Sans Mono", monospace;
  font-size: 11.630px;
  letter-spacing: 0;
}

.ln {
  display: flex;
  height: 15px;
  line-height: 15px;
}

.ln b {
  width: 20px;
  flex: none;
  margin-right: 4px;
  font-weight: normal;
  text-align: right;
  color: #787878;
  background: #fff;
}

.ln code {
  flex: 1;
  font: inherit;
  white-space: pre;
  color: #111;
}

.ln-cur code {
  background: #e8f2fe;
}

.ln-grey code {
  background: #dfdfdf;
}

.cm { color: #3f8f8f !important; }
.cm2 { color: #3f7f5f; }
.ln em { font-style: normal; font-weight: bold; color: #7f0055; }
.ln s { text-decoration: none; color: #2a00ff; }
.ln mark { background: #d4e8c8; color: #111; }

.vbar-editor {
  width: 16px;
}

.overview {
  width: 14px;
  flex: none;
  background: #f8f8f8;
}

.overview i {
  display: block;
  width: 7px;
  height: 3px;
  margin: 134px 0 0 3px;
  background: #e8f0dc;
  border: 1px solid #cfe0bc;
}

.editor-hbar {
  display: flex;
  justify-content: space-between;
  height: 15px;
  flex: none;
  margin-left: 35px;
  margin-right: 16px;
  background: #efefef;
}

/* console */
.console-label {
  height: 16px;
  line-height: 16px;
  flex: none;
  padding-left: 1px;
  border-bottom: 1px solid #a0a0a0;
}

.console-body {
  display: flex;
  flex: 1;
  min-height: 0;
}

.console-out {
  flex: 1;
  margin: 0;
  padding: 1px 0 0 3px;
  font-family: "DejaVu Sans Mono", monospace;
  font-size: 11.630px;
  line-height: 15px;
  letter-spacing: 0;
  color: #222;
}

.vbar-console {
  margin-right: 2px;
}

.hbar-console {
  margin-right: 17px;
  height: 16px;
}

/* status */
.statusbar {
  display: flex;
  align-items: center;
  height: 28px;
  flex: none;
  box-sizing: border-box;
  padding: 3px 0 0 5px;
}

.status-le {
  width: 23px;
  padding-left: 4px;
  color: #333;
  box-sizing: border-box;
}

.status-end {
  margin-left: 460px;
}

/* tera term */
.term-client {
  border-top-color: #777;
}

.term-menu {
  padding-left: 5px;
  gap: 13.700px;
}

.term-body {
  display: flex;
  flex: 1;
  min-height: 0;
  border-top: 1px solid #9a9a9a;
}

.term-screen {
  flex: 1;
  background: #000;
  padding: 1px 0 0 1px;
}

.cursor {
  width: 5px;
  height: 9px;
  border: 1px solid #fff;
}

.vbar-term {
  width: 16px;
  background: #f0f0f0;
}
```
